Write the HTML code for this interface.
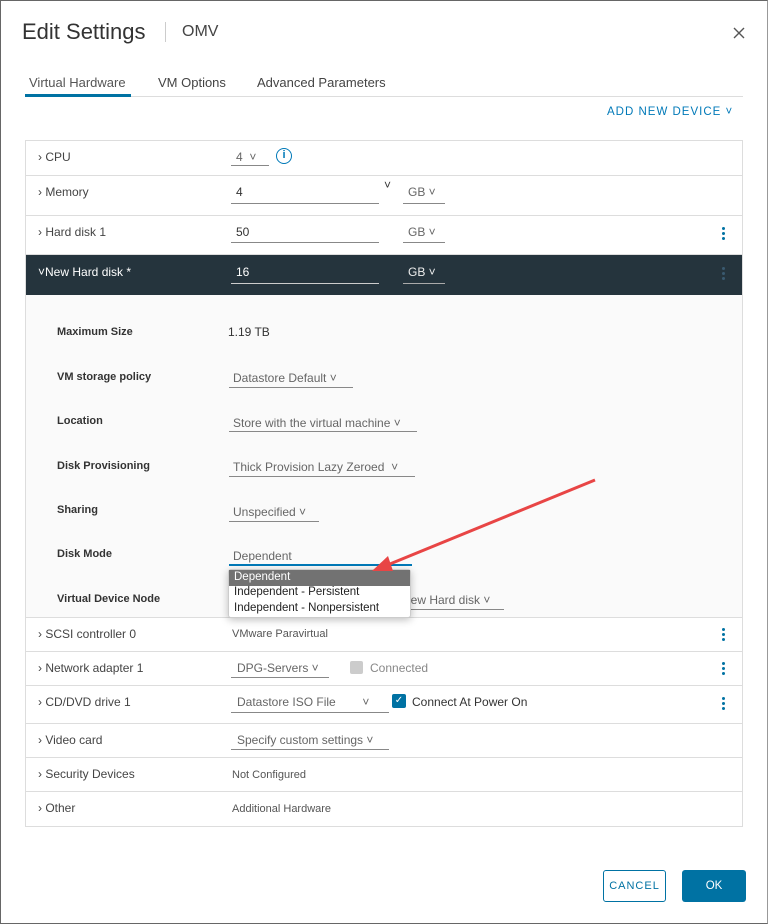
<!DOCTYPE html>
<html><head><style>
*{margin:0;padding:0;box-sizing:border-box}
body{width:768px;height:924px;background:#fff;font-family:"Liberation Sans",sans-serif;position:relative;overflow:hidden;color:#333}
.frame{position:absolute;left:0;top:0;width:768px;height:924px;border:1px solid #666;border-right-color:#999}
.a{position:absolute;white-space:nowrap}
.box{position:absolute;left:25px;top:140px;width:718px;height:687px;border:1px solid #ddd}
.row{position:absolute;left:0;width:716px;border-bottom:1px solid #ddd}
.lbl{position:absolute;left:12px;font-size:12px;color:#444}
.ul{position:absolute;border-bottom:1px solid #888}
.kb{position:absolute;left:31px;font-size:11px;font-weight:bold;color:#333}
.v{font-size:12px;color:#666}
.dots{position:absolute;left:696px;width:3px}
.dots i{display:block;width:3px;height:3px;border-radius:50%;background:#0072a3;margin-bottom:2px}
</style></head><body>
<div class="frame"></div>
<div class="a" style="left:22px;top:19px;font-size:22px;color:#333">Edit Settings</div>
<div class="a" style="left:165px;top:22px;width:1px;height:20px;background:#ccc"></div>
<div class="a" style="left:182px;top:23px;font-size:16px;color:#444">OMV</div>
<svg class="a" style="left:733px;top:27px" width="12" height="12"><path d="M1 1L11 11M11 1L1 11" stroke="#555" stroke-width="1.4"/></svg>
<div class="a" style="left:29px;top:75px;font-size:13px;color:#555">Virtual Hardware</div>
<div class="a" style="left:158px;top:75px;font-size:13px;color:#444">VM Options</div>
<div class="a" style="left:257px;top:75px;font-size:13px;color:#444">Advanced Parameters</div>
<div class="a" style="left:25px;top:96px;width:718px;height:1px;background:#ddd"></div>
<div class="a" style="left:25px;top:94px;width:106px;height:3px;background:#0072a3"></div>
<div class="a" style="left:607px;top:106px;font-size:11.5px;color:#0079b8;letter-spacing:1px">ADD NEW DEVICE ˅</div>

<div class="box">
 <div class="row" style="top:0;height:35px"><div class="lbl" style="top:9px">› CPU</div><div class="a v" style="left:210px;top:9px">4 &nbsp;˅</div><div class="ul" style="left:205px;top:24px;width:38px"></div><div class="a" style="left:250px;top:7px;width:16px;height:16px;border:1.5px solid #0079b8;border-radius:50%;color:#0079b8;font-size:11px;text-align:center;line-height:13px;font-weight:bold">i</div></div>
 <div class="row" style="top:35px;height:40px"><div class="lbl" style="top:9px">› Memory</div><div class="a" style="left:210px;top:9px;font-size:12px">4</div><div class="ul" style="left:205px;top:27px;width:148px"></div><div class="a" style="left:358px;top:2px;font-size:12px">˅</div><div class="a v" style="left:382px;top:9px">GB ˅</div><div class="ul" style="left:377px;top:27px;width:42px"></div></div>
 <div class="row" style="top:75px;height:39px"><div class="lbl" style="top:9px">› Hard disk 1</div><div class="a" style="left:210px;top:9px;font-size:12px">50</div><div class="ul" style="left:205px;top:26px;width:148px"></div><div class="a v" style="left:382px;top:9px">GB ˅</div><div class="ul" style="left:377px;top:26px;width:42px"></div><div class="dots" style="top:11px"><i></i><i></i><i></i></div></div>
 <div class="row" style="top:114px;height:40px;background:#25343d;border-color:#25343d"><div class="lbl" style="top:10px;color:#fff">˅New Hard disk *</div><div class="a" style="left:210px;top:10px;font-size:12px;color:#fff">16</div><div class="ul" style="left:205px;top:28px;width:148px;border-color:#ccc"></div><div class="a" style="left:382px;top:10px;font-size:12px;color:#eee">GB ˅</div><div class="ul" style="left:377px;top:28px;width:42px;border-color:#aaa"></div><div class="dots" style="top:12px"><i style="background:#3a5a70"></i><i style="background:#3a5a70"></i><i style="background:#3a5a70"></i></div></div>
 <div class="row" style="top:154px;height:323px;background:#fafafa">
  <div class="kb" style="top:31px">Maximum Size</div><div class="a" style="left:202px;top:30px;font-size:12px">1.19 TB</div>
  <div class="kb" style="top:76px">VM storage policy</div><div class="a v" style="left:207px;top:76px">Datastore Default ˅</div><div class="ul" style="left:203px;top:92px;width:124px"></div>
  <div class="kb" style="top:120px">Location</div><div class="a v" style="left:207px;top:121px">Store with the virtual machine ˅</div><div class="ul" style="left:203px;top:136px;width:188px"></div>
  <div class="kb" style="top:165px">Disk Provisioning</div><div class="a v" style="left:207px;top:165px">Thick Provision Lazy Zeroed &nbsp;˅</div><div class="ul" style="left:203px;top:181px;width:186px"></div>
  <div class="kb" style="top:209px">Sharing</div><div class="a v" style="left:207px;top:210px">Unspecified ˅</div><div class="ul" style="left:203px;top:226px;width:90px"></div>
  <div class="kb" style="top:253px">Disk Mode</div><div class="a v" style="left:207px;top:254px">Dependent</div><div class="ul" style="left:203px;top:269px;width:183px;border-bottom:2px solid #0079b8"></div>
  <div class="kb" style="top:298px">Virtual Device Node</div><div class="a v" style="left:382px;top:298px">lew Hard disk ˅</div><div class="ul" style="left:378px;top:314px;width:100px"></div>
 </div>
 <div class="row" style="top:477px;height:34px"><div class="lbl" style="top:9px">› SCSI controller 0</div><div class="a" style="left:206px;top:10px;font-size:11px;color:#555">VMware Paravirtual</div><div class="dots" style="top:10px"><i></i><i></i><i></i></div></div>
 <div class="row" style="top:511px;height:34px"><div class="lbl" style="top:9px">› Network adapter 1</div><div class="a v" style="left:211px;top:9px">DPG-Servers ˅</div><div class="ul" style="left:205px;top:25px;width:98px"></div><div class="a" style="left:324px;top:9px;width:13px;height:13px;background:#ccc;border-radius:2px"></div><div class="a" style="left:344px;top:9px;font-size:12px;color:#888">Connected</div><div class="dots" style="top:10px"><i></i><i></i><i></i></div></div>
 <div class="row" style="top:545px;height:38px"><div class="lbl" style="top:9px">› CD/DVD drive 1</div><div class="a v" style="left:211px;top:9px">Datastore ISO File &nbsp;&nbsp;&nbsp;&nbsp;&nbsp;&nbsp;&nbsp;˅</div><div class="ul" style="left:205px;top:26px;width:158px"></div><div class="a" style="left:366px;top:8px;width:14px;height:14px;background:#0072a3;border-radius:2px;color:#fff;font-size:10px;text-align:center;line-height:14px">✓</div><div class="a" style="left:386px;top:9px;font-size:12px;color:#333">Connect At Power On</div><div class="dots" style="top:11px"><i></i><i></i><i></i></div></div>
 <div class="row" style="top:583px;height:34px"><div class="lbl" style="top:9px">› Video card</div><div class="a v" style="left:211px;top:9px">Specify custom settings ˅</div><div class="ul" style="left:205px;top:25px;width:158px"></div></div>
 <div class="row" style="top:617px;height:34px"><div class="lbl" style="top:9px">› Security Devices</div><div class="a" style="left:206px;top:11px;font-size:11px;color:#555">Not Configured</div></div>
 <div class="row" style="top:651px;height:35px;border:none"><div class="lbl" style="top:9px">› Other</div><div class="a" style="left:206px;top:11px;font-size:11px;color:#555">Additional Hardware</div></div>
</div>

<div class="a" style="left:228px;top:569px;width:183px;height:49px;background:#fff;border:1px solid #ccc;border-radius:3px;box-shadow:0 2px 8px rgba(0,0,0,.25);font-size:11.5px;color:#222">
 <div style="background:#727272;color:#fff;padding:1px 5px;height:16px">Dependent</div>
 <div style="padding:0 5px;height:16px">Independent - Persistent</div>
 <div style="padding:0 5px">Independent - Nonpersistent</div>
</div>
<svg class="a" style="left:0;top:0" width="768" height="924"><line x1="595" y1="480" x2="385" y2="566" stroke="#e84545" stroke-width="3"/><polygon points="372,571 388,556 393,571" fill="#e84545"/></svg>

<div class="a" style="left:603px;top:870px;width:63px;height:32px;border:1px solid #0072a3;border-radius:3px;color:#0072a3;font-size:11px;letter-spacing:1px;text-align:center;line-height:30px">CANCEL</div>
<div class="a" style="left:682px;top:870px;width:64px;height:32px;background:#0072a3;border-radius:3px;color:#fff;font-size:11.5px;text-align:center;line-height:32px">OK</div>
</body></html>
